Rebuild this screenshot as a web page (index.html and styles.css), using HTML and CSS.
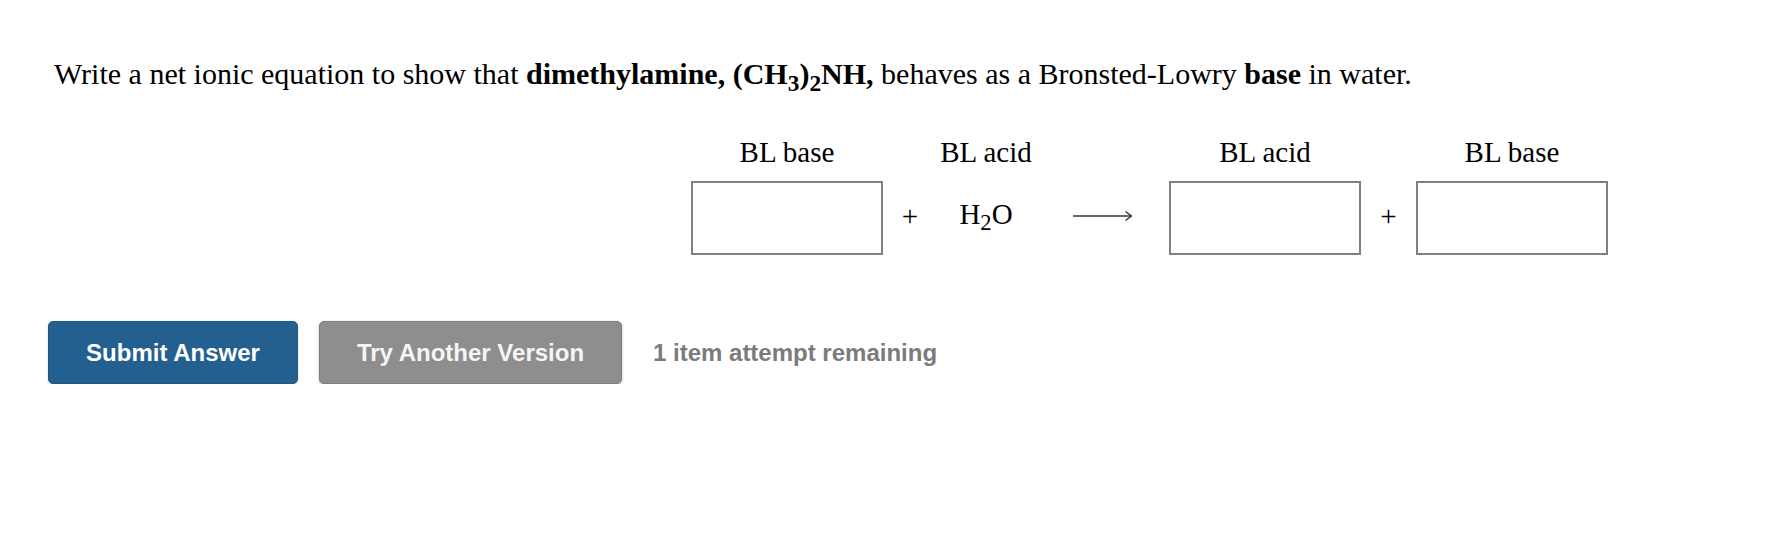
FILE: index.html
```html
<!DOCTYPE html>
<html lang="en">
<head>
  <meta charset="UTF-8" />
  <title>Net Ionic Equation</title>
  <link rel="stylesheet" href="styles.css">
</head>
<body>
  <div class="question">
    <p class="prompt">Write a net ionic equation to show that <b>dimethylamine, (CH<sub>3</sub>)<sub>2</sub>NH,</b> behaves as a Bronsted-Lowry <b>base</b> in water.</p>

    <div class="equation">
      <div class="label">BL base</div>
      <div></div>
      <div class="label">BL acid</div>
      <div></div>
      <div class="label">BL acid</div>
      <div></div>
      <div class="label">BL base</div>

      <input class="slot" type="text">
      <div class="sign">+</div>
      <div class="species"><span>H<sub>2</sub>O</span></div>
      <div class="sign">
        <svg class="arrow" width="60" height="14" viewBox="0 0 60 14">
          <line x1="0" y1="7" x2="58" y2="7" stroke="#333" stroke-width="1.4"/>
          <path d="M52.5 2.5 L58.5 7 L52.5 11.5" fill="none" stroke="#333" stroke-width="1.4"/>
        </svg>
      </div>
      <input class="slot" type="text">
      <div class="sign">+</div>
      <input class="slot" type="text">
    </div>
  </div>

  <div class="actions">
    <button class="btn btn-submit">Submit Answer</button>
    <button class="btn btn-retry">Try Another Version</button>
    <span class="attempts">1 item attempt remaining</span>
  </div>
</body>
</html>
```

FILE: styles.css
```css
body {
  margin: 0;
  background: #ffffff;
  color: #000000;
  font-family: "Liberation Serif", "Times New Roman", serif;
}

.question {
  padding: 57px 0 0 54px;
}

.prompt {
  margin: 0;
  font-size: 30px;
  line-height: 34px;
}

.prompt sub,
.species sub {
  font-size: 0.78em;
  line-height: 0;
  vertical-align: -0.28em;
}

.equation {
  display: grid;
  grid-template-columns: 192px 54px 98px 134px 192px 55px 192px;
  grid-template-rows: 46px 74px;
  margin: 44px 0 0 637px;
  font-size: 29px;
}

.label {
  text-align: center;
  line-height: 34px;
  align-self: start;
}

.slot {
  box-sizing: border-box;
  width: 192px;
  height: 74px;
  margin: 0;
  border: 2px solid #808080;
  background: #ffffff;
  font-size: 20px;
  padding: 0 8px;
}

.sign,
.species {
  display: flex;
  align-items: center;
  justify-content: center;
  padding-bottom: 4px;
}

.species {
  padding-bottom: 8px;
}

.arrow {
  margin-left: 2px;
}

.actions {
  display: flex;
  align-items: center;
  gap: 21px;
  padding: 66px 0 0 48px;
}

.btn {
  height: 63px;
  border-radius: 5px;
  font-family: "Liberation Sans", Arial, sans-serif;
  font-weight: bold;
  font-size: 24px;
  color: #ffffff;
  cursor: pointer;
}

.btn-submit {
  width: 250px;
  background: #23608f;
  border: 1px solid #1f5683;
  box-shadow: 0 1px 3px rgba(0, 0, 0, 0.15);
}

.btn-retry {
  width: 303px;
  background: #8e8e8e;
  border: 1px solid #7d7d7d;
  box-shadow: 0 1px 3px rgba(0, 0, 0, 0.25);
  color: #f5f5f5;
}

.attempts {
  margin-left: 10px;
  font-family: "Liberation Sans", Arial, sans-serif;
  font-weight: bold;
  font-size: 24px;
  color: #7b7b7b;
}
```
